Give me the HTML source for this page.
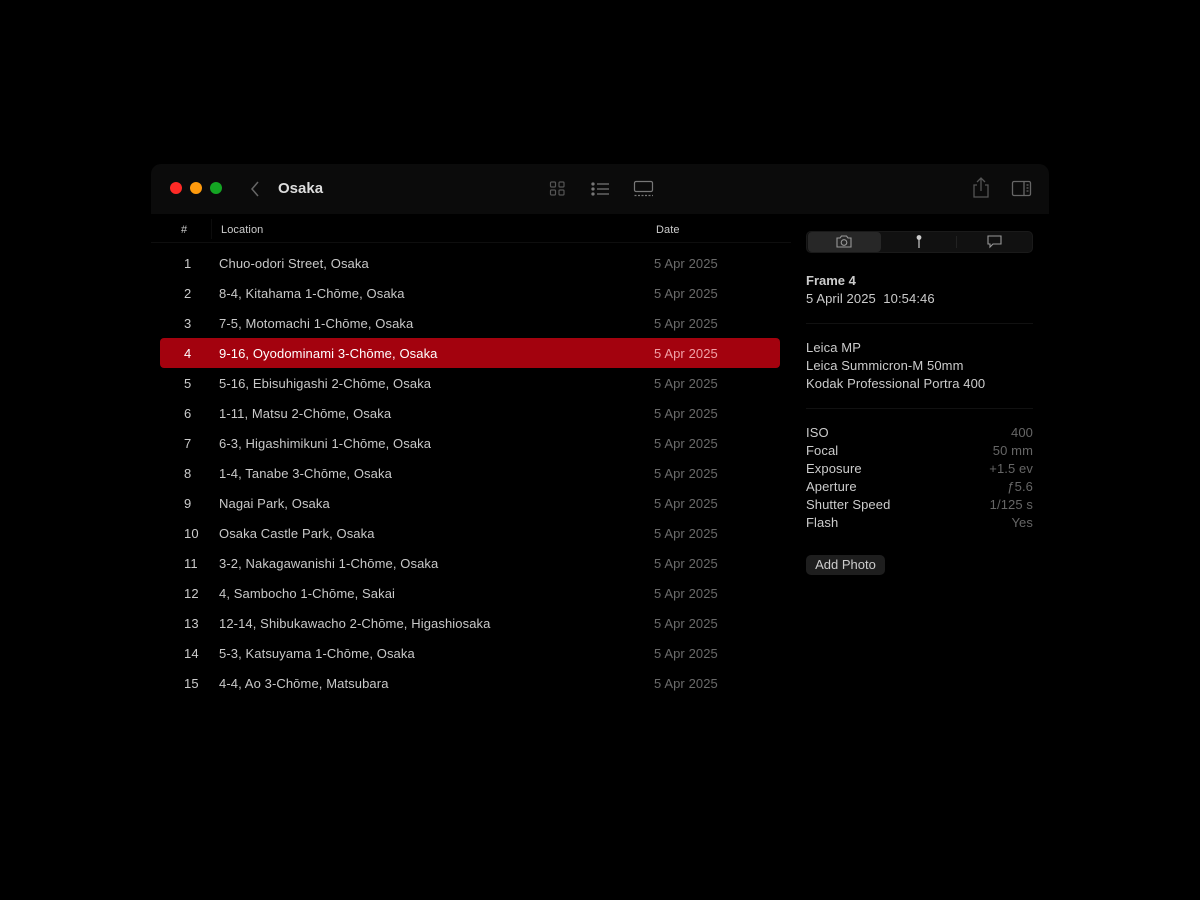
<!DOCTYPE html>
<html><head><meta charset="utf-8"><style>
*{margin:0;padding:0;box-sizing:border-box}
body{width:1200px;height:900px;background:#000;font-family:"Liberation Sans",sans-serif;position:relative;overflow:hidden;color:#ccc}
.win{position:absolute;left:151px;top:164px;width:898px;height:560px;background:#000;border-radius:10px;overflow:hidden}
.tb{position:absolute;left:0;top:0;width:898px;height:50px;background:#0b0b0b}
.dot{position:absolute;top:18px;width:12px;height:12px;border-radius:50%}
.t{position:absolute;white-space:nowrap;font-size:13px;line-height:16px;letter-spacing:0.1px}
.hl{position:absolute;left:9px;top:174px;width:620px;height:30px;background:#a3020e;border-radius:4px}
.sep{position:absolute;height:1px;background:#111}
svg{position:absolute}
</style></head><body>
<div class="win">
 <div class="tb">
  <div class="dot" style="left:19px;background:#fe2a26"></div>
  <div class="dot" style="left:39px;background:#fe9a0d"></div>
  <div class="dot" style="left:59px;background:#14a523"></div>
  <svg style="left:98px;top:16px" width="12" height="18" viewBox="0 0 12 18"><path d="M9 2 L3 9 L9 16" stroke="#666" stroke-width="1.5" fill="none"/></svg>
  <div class="t" style="left:127px;top:16px;font-size:15px;line-height:18px;font-weight:bold;color:#ddd;letter-spacing:0">Osaka</div>
  <svg style="left:398px;top:16px" width="18" height="18" viewBox="0 0 18 18" fill="none" stroke="#555" stroke-width="1.2"><rect x="1.5" y="2" width="5" height="5" rx="1"/><rect x="10" y="2" width="5" height="5" rx="1"/><rect x="1.5" y="10" width="5" height="5" rx="1"/><rect x="10" y="10" width="5" height="5" rx="1"/></svg>
  <svg style="left:440px;top:16px" width="20" height="18" viewBox="0 0 20 18" stroke="#777" stroke-width="1.3"><circle cx="2" cy="4" r="1" fill="#777"/><circle cx="2" cy="9" r="1" fill="#777"/><circle cx="2" cy="14" r="1" fill="#777"/><path d="M6 4H18M6 9H18M6 14H18"/></svg>
  <svg style="left:482px;top:16px" width="22" height="18" viewBox="0 0 22 18" fill="none" stroke="#777" stroke-width="1.2"><rect x="1.5" y="1.5" width="18" height="10" rx="1.5"/><path d="M1.5 15.5H20" stroke-dasharray="2 1.5"/></svg>
  <svg style="left:820px;top:12px" width="20" height="24" viewBox="0 0 20 24" fill="none" stroke="#555" stroke-width="1.3"><path d="M10 2V15M6 6L10 2L14 6M6 9H3V21H17V9H14"/></svg>
  <svg style="left:860px;top:16px" width="22" height="18" viewBox="0 0 22 18" fill="none" stroke="#666" stroke-width="1.3"><rect x="1.5" y="1.5" width="18" height="14" rx="1.5"/><path d="M13 1.5V15.5M15.5 5H17.5M15.5 8H17.5M15.5 11H17.5"/></svg>
 </div>
 <div class="t" style="left:30px;top:58px;font-size:11px;color:#ccc">#</div>
 <div class="sep" style="left:60px;top:55px;width:1px;height:20px;background:#0c0c0c"></div>
 <div class="t" style="left:70px;top:58px;font-size:11px;color:#ccc">Location</div>
 <div class="t" style="left:505px;top:58px;font-size:11px;color:#ccc">Date</div>
 <div class="sep" style="left:0;top:78px;width:640px;background:#0e0e0e"></div>
 <div class="hl"></div>
 <div id="rows"></div>
 <div style="position:absolute;left:655px;top:67px;width:227px;height:22px;background:#111;border-radius:5px;border:1px solid #1a1a1a"></div>
 <div style="position:absolute;left:657px;top:68px;width:73px;height:20px;background:#272727;border-radius:4px"></div>
 <div class="sep" style="left:805px;top:72px;width:1px;height:12px;background:#222"></div>
 <svg style="left:684px;top:70px" width="18" height="16" viewBox="0 0 18 16" fill="none" stroke="#999" stroke-width="1.1"><path d="M2 4H5L6.5 2H11.5L13 4H16V13H2Z"/><circle cx="9" cy="8.5" r="2.8"/></svg>
 <svg style="left:764px;top:70px" width="8" height="16" viewBox="0 0 8 16" stroke="#ccc" stroke-width="1.2" fill="none"><circle cx="4" cy="3.5" r="1.8" fill="#ccc"/><path d="M4 5V14"/></svg>
 <svg style="left:835px;top:70px" width="18" height="16" viewBox="0 0 18 16" fill="none" stroke="#999" stroke-width="1.1"><path d="M2 2H15V10H7L4 13V10H2Z"/></svg>
 <div class="t" style="left:655px;top:109px;font-weight:bold;color:#ccc;letter-spacing:0">Frame 4</div>
 <div class="t" style="left:655px;top:127px;color:#ccc">5 April 2025&nbsp; 10:54:46</div>
 <div class="sep" style="left:655px;top:159px;width:227px;background:#111"></div>
 <div class="t" style="left:655px;top:176px;color:#ccc">Leica MP</div>
 <div class="t" style="left:655px;top:194px;color:#ccc">Leica Summicron-M 50mm</div>
 <div class="t" style="left:655px;top:212px;color:#ccc">Kodak Professional Portra 400</div>
 <div class="sep" style="left:655px;top:244px;width:227px;background:#111"></div>
 <div id="specs"></div>
 <div style="position:absolute;left:655px;top:391px;width:79px;height:20px;background:#1e1e1e;border-radius:5px;font-size:13px;line-height:20px;text-align:center;color:#ccc">Add Photo</div>
</div>
<script>
var r=[["1","Chuo-odori Street, Osaka"],["2","8-4, Kitahama 1-Chōme, Osaka"],["3","7-5, Motomachi 1-Chōme, Osaka"],["4","9-16, Oyodominami 3-Chōme, Osaka"],["5","5-16, Ebisuhigashi 2-Chōme, Osaka"],["6","1-11, Matsu 2-Chōme, Osaka"],["7","6-3, Higashimikuni 1-Chōme, Osaka"],["8","1-4, Tanabe 3-Chōme, Osaka"],["9","Nagai Park, Osaka"],["10","Osaka Castle Park, Osaka"],["11","3-2, Nakagawanishi 1-Chōme, Osaka"],["12","4, Sambocho 1-Chōme, Sakai"],["13","12-14, Shibukawacho 2-Chōme, Higashiosaka"],["14","5-3, Katsuyama 1-Chōme, Osaka"],["15","4-4, Ao 3-Chōme, Matsubara"]];
var h="";r.forEach(function(x,i){var y=92+i*30,s=i==3;
h+='<div class="t" style="left:33px;top:'+y+'px;color:'+(s?'#fff':'#ccc')+'">'+x[0]+'</div>';
h+='<div class="t" style="left:68px;top:'+y+'px;color:'+(s?'#fff':'#c8c8c8')+'">'+x[1]+'</div>';
h+='<div class="t" style="left:503px;top:'+y+'px;color:'+(s?'#f2a0a6':'#6a6a6a')+'">5 Apr 2025</div>';});
document.getElementById("rows").innerHTML=h;
var s=[["ISO","400"],["Focal","50 mm"],["Exposure","+1.5 ev"],["Aperture","ƒ5.6"],["Shutter Speed","1/125 s"],["Flash","Yes"]];h="";
s.forEach(function(x,i){var y=261+i*18;h+='<div class="t" style="left:655px;top:'+y+'px;color:#ccc">'+x[0]+'</div><div class="t" style="left:655px;width:227px;text-align:right;top:'+y+'px;color:#666">'+x[1]+'</div>';});
document.getElementById("specs").innerHTML=h;
</script>
</body></html>
